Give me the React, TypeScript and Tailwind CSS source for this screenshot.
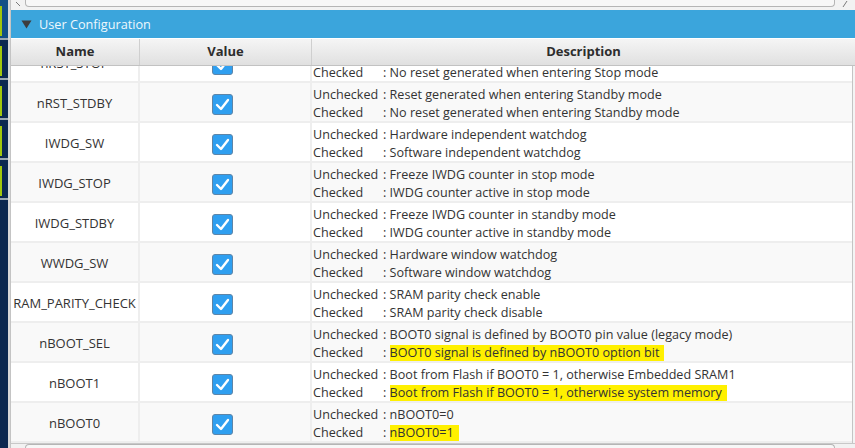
import React from "react";

type Row = { name: string; un: string; ch: string; hl?: boolean };

const rows: Row[] = [
  { name: "nRST_STOP", un: "Reset generated when entering Stop mode", ch: "No reset generated when entering Stop mode" },
  { name: "nRST_STDBY", un: "Reset generated when entering Standby mode", ch: "No reset generated when entering Standby mode" },
  { name: "IWDG_SW", un: "Hardware independent watchdog", ch: "Software independent watchdog" },
  { name: "IWDG_STOP", un: "Freeze IWDG counter in stop mode", ch: "IWDG counter active in stop mode" },
  { name: "IWDG_STDBY", un: "Freeze IWDG counter in standby mode", ch: "IWDG counter active in standby mode" },
  { name: "WWDG_SW", un: "Hardware window watchdog", ch: "Software window watchdog" },
  { name: "RAM_PARITY_CHECK", un: "SRAM parity check enable", ch: "SRAM parity check disable" },
  { name: "nBOOT_SEL", un: "BOOT0 signal is defined by BOOT0 pin value (legacy mode)", ch: "BOOT0 signal is defined by nBOOT0 option bit", hl: true },
  { name: "nBOOT1", un: "Boot from Flash if BOOT0 = 1, otherwise Embedded SRAM1", ch: "Boot from Flash if BOOT0 = 1, otherwise system memory", hl: true },
  { name: "nBOOT0", un: "nBOOT0=0", ch: "nBOOT0=1", hl: true },
];

function CheckBox() {
  return (
    <div className="w-[21px] h-[21px] rounded-[3px] bg-[#2f9ff0] border border-[#5d85a8] flex items-center justify-center">
      <svg width="15" height="13" viewBox="0 0 15 13">
        <path d="M2 7 L6 11 L13 2" fill="none" stroke="#ffffff" strokeWidth="2.4" strokeLinecap="round" strokeLinejoin="round" />
      </svg>
    </div>
  );
}

function SideBar() {
  const items = [0, 1, 2, 3, 4];
  return (
    <div className="w-[8px] h-full bg-[#0c2850] flex flex-col shrink-0">
      {items.map((i) => (
        <div key={i} className={`flex flex-col ${i === 0 ? "bg-[#134f86]" : ""}`}>
          <div className="h-[6px]" />
          <div className="h-[30px] w-[2px] bg-[#a2c60a]" />
          <div className="h-[2px]" />
          <div className="h-[2px] bg-[#9aa6b2]" />
        </div>
      ))}
    </div>
  );
}

export default function App() {
  const font = { fontFamily: '"Open Sans", "Noto Sans", sans-serif' };
  return (
    <div className="w-[855px] h-[448px] flex overflow-hidden bg-white text-[#333333]" style={font}>
      <SideBar />
      <div className="w-[3px] h-full bg-[#d9d9d9] border-r border-[#c4c4c4] shrink-0" />
      <div className="flex-1 flex flex-col min-w-0">
        {/* top scroll bar remnant */}
        <div className="h-[10px] bg-[#f2f2f2] flex items-start shrink-0">
          <div className="w-[14px] h-[8px] flex items-center justify-center">
            <svg width="6" height="6" viewBox="0 0 6 6"><path d="M1 1 L5 5" stroke="#7a7a7a" strokeWidth="1" /></svg>
          </div>
          <div className="w-[810px] h-[7px] border border-t-0 border-[#b5b5b5] rounded-b-[4px] bg-[#f7f7f7]" />
          <div className="flex-1 flex justify-center">
            <svg width="6" height="8" viewBox="0 0 6 8"><path d="M5 1 L1 7" stroke="#7a7a7a" strokeWidth="1" /></svg>
          </div>
        </div>
        {/* section header */}
        <div className="h-[29px] bg-[#3ba5dc] border-b border-white flex items-center shrink-0">
          <svg width="11" height="9" viewBox="0 0 11 9" className="ml-[10px] mt-[1px]">
            <path d="M0.5 0.5 L10.5 0.5 L5.5 8.5 Z" fill="#3d3d3d" />
          </svg>
          <span className="ml-[7px] text-[12.7px] text-[#eef8fd] leading-none">User Configuration</span>
        </div>
        {/* column header */}
        <div className="h-[27px] flex bg-gradient-to-b from-[#f5f5f5] to-[#e0e0e0] border-b border-[#c2c2c2] shrink-0 font-bold text-[13px] text-[#2d2d2d]">
          <div className="w-[129px] flex items-center justify-center border-r border-[#cfcfcf]">Name</div>
          <div className="w-[172px] flex items-center justify-center border-r border-[#cfcfcf]">Value</div>
          <div className="flex-1 flex items-center justify-center">Description</div>
        </div>
        {/* body */}
        <div className="flex-1 overflow-hidden flex min-h-0">
          <div className="flex-1 flex flex-col -mt-[23px] border-r border-[#c4c4c4]">
            {rows.map((r, i) => (
              <div
                key={r.name}
                className={`h-[40px] shrink-0 flex border-b-2 border-[#eeeeee] ${i % 2 === 1 ? "bg-[#f9f9f9]" : "bg-white"}`}
              >
                <div className="w-[129px] flex items-center justify-center pt-[3px] text-[13px] border-r-2 border-[#eeeeee] whitespace-nowrap">
                  {r.name}
                </div>
                <div className="w-[172px] flex items-center justify-center pt-[4px] pr-[6px] border-r-2 border-[#eeeeee]">
                  <CheckBox />
                </div>
                <div className="flex-1 flex flex-col justify-center pt-[4px] pl-[1px] text-[12.6px] leading-[18px] whitespace-nowrap">
                  <div className="flex">
                    <span className="w-[70px]">Unchecked</span>
                    <span>:&nbsp;</span>
                    <span>{r.un}</span>
                  </div>
                  <div className="flex items-center">
                    <span className="w-[70px]">Checked</span>
                    <span>:&nbsp;</span>
                    <span className={r.hl ? "bg-[#fff000] pr-[5px] leading-[16px]" : ""}>{r.ch}</span>
                  </div>
                </div>
              </div>
            ))}
          </div>
          <div className="w-[2px] bg-[#f4f4f4]" />
        </div>
        {/* bottom scroll bar */}
        <div className="h-[5px] bg-[#f2f2f2] border-t border-[#c8c8c8] flex shrink-0">
          <div className="w-[14px]" />
          <div className="w-[810px] h-[6px] border border-b-0 border-[#b5b5b5] rounded-t-[4px] bg-[#f7f7f7]" />
        </div>
      </div>
    </div>
  );
}
